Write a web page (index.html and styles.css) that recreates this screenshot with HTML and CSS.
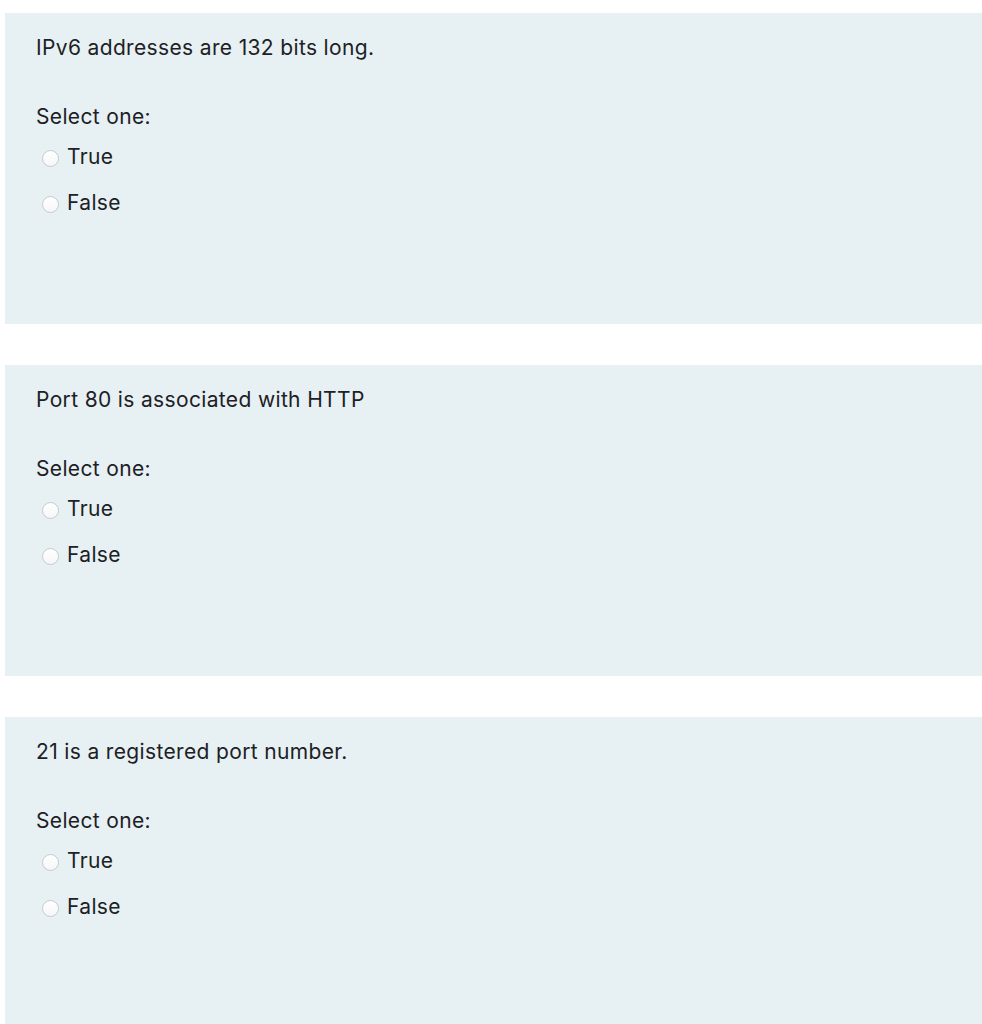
FILE: index.html
```html
<!DOCTYPE html>
<html>
<head>
<meta charset="utf-8">
<link rel="stylesheet" href="styles.css">
</head>
<body>
<div class="quiz">
  <div class="que">
    <div class="qtext">IPv6 addresses are 132 bits long.</div>
    <div class="prompt">Select one:</div>
    <div class="answer">
      <label class="opt"><span class="radio"></span><span>True</span></label>
      <label class="opt"><span class="radio"></span><span>False</span></label>
    </div>
  </div>
  <div class="que">
    <div class="qtext">Port 80 is associated with HTTP</div>
    <div class="prompt">Select one:</div>
    <div class="answer">
      <label class="opt"><span class="radio"></span><span>True</span></label>
      <label class="opt"><span class="radio"></span><span>False</span></label>
    </div>
  </div>
  <div class="que">
    <div class="qtext">21 is a registered port number.</div>
    <div class="prompt">Select one:</div>
    <div class="answer">
      <label class="opt"><span class="radio"></span><span>True</span></label>
      <label class="opt"><span class="radio"></span><span>False</span></label>
    </div>
  </div>
</div>
</body>
</html>
```
FILE: styles.css
```css
html, body {
  margin: 0;
  padding: 0;
  background: #ffffff;
}
body {
  font-family: Inter, "Liberation Sans", sans-serif;
  color: #1d2125;
  font-size: 21px;
  letter-spacing: 0.35px;
}
.quiz {
  display: flex;
  flex-direction: column;
  gap: 41px;
  padding: 13px 0 0 5px;
}
.que {
  background: #e7f0f3;
  height: 311px;
  box-sizing: border-box;
  padding: 23px 31px 0 31px;
  display: flex;
  flex-direction: column;
}
.qtext {
  line-height: 24px;
}
.prompt {
  margin-top: 45px;
  line-height: 24px;
}
.answer {
  display: flex;
  flex-direction: column;
  gap: 22px;
  margin-top: 16px;
  padding-left: 6px;
}
.opt {
  display: flex;
  align-items: center;
  gap: 8px;
  line-height: 24px;
}
.radio {
  width: 17px;
  height: 17px;
  border-radius: 50%;
  background: linear-gradient(#ffffff, #f5f6f7);
  border: 1px solid #c6cacd;
  box-sizing: border-box;
  margin-top: 2px;
}
```
